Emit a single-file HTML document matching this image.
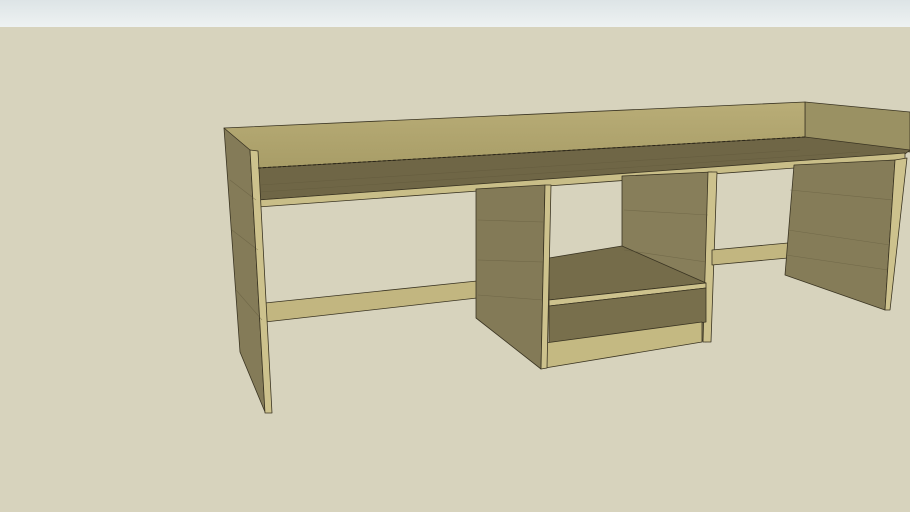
<!DOCTYPE html>
<html><head><style>
html,body{margin:0;padding:0;width:910px;height:512px;overflow:hidden;background:#d7d3bd;font-family:"Liberation Sans",sans-serif}
.top{position:absolute;left:0;top:0;width:910px;height:27px;background:linear-gradient(#dde4e6,#eef2f2)}
svg{position:absolute;left:0;top:0}
</style></head><body>
<div class="top"></div>
<svg width="910" height="512" viewBox="0 0 910 512">
<defs>
<linearGradient id="lw" x1="0" y1="0" x2="0" y2="1"><stop offset="0" stop-color="#b9ad77"/><stop offset="1" stop-color="#a89d67"/></linearGradient>
</defs>
<g stroke="#3a3422" stroke-width="0.8" stroke-linejoin="round">
<polygon points="805,102 910,112 910,152 805,138" fill="#9a9163"/>
<polygon points="224,128 805,102 805,138 258,168" fill="url(#lw)"/>
<polygon points="258,168 805,137 910,150 905,154 258,200" fill="#6f6646"/>
<polygon points="258,200 905,153 905,160 258,207" fill="#c9be88"/>
<polygon points="265,303 477,281 477,298 265,322" fill="#c2b680"/>
<polygon points="224,128 250,150 265,412 240,352" fill="#847b58"/>
<polygon points="250,150 258,151 272,413 265,413" fill="#cdc28d"/>
<polygon points="622,176 712,172 706,342 622,300" fill="#877e5a"/>
<polygon points="708,172 717,172 711,342 703,342" fill="#cdc28d"/>
<polygon points="549,258 622,246 706,283 549,300" fill="#756c4a"/>
<polygon points="549,300 706,283 706,288 549,306" fill="#cdc28d"/>
<polygon points="549,306 706,288 706,322 549,343" fill="#786f4c"/>
<polygon points="545,343 702,322 702,342 545,368" fill="#c4b982"/>
<polygon points="476,189 545,185 541,369 476,318" fill="#837a57"/>
<polygon points="545,185 551,185 547,368 541,369" fill="#cdc28d"/>
<polygon points="712,250 788,243 788,258 712,265" fill="#c2b680"/>
<polygon points="794,165 895,160 885,310 785,275" fill="#857c58"/>
<polygon points="895,160 907,158 890,310 885,310" fill="#cdc28d"/>
</g>
<g stroke="#5e5639" stroke-width="0.6" opacity="0.5" fill="none">
<path d="M230,180 L256,200 M232,230 L258,250 M236,290 L262,320"/>
<path d="M478,220 L543,222 M478,260 L543,262 M478,295 L543,300"/>
<path d="M624,210 L708,215 M624,250 L706,262"/>
<path d="M790,190 L893,200 M788,230 L890,245 M786,255 L888,270"/>
<path d="M260,185 L800,150 M260,192 L860,152"/>
</g>
<path d="M258,168 L805,137" stroke="#2a2518" stroke-width="1" stroke-dasharray="3,2"/>
</svg>
</body></html>
